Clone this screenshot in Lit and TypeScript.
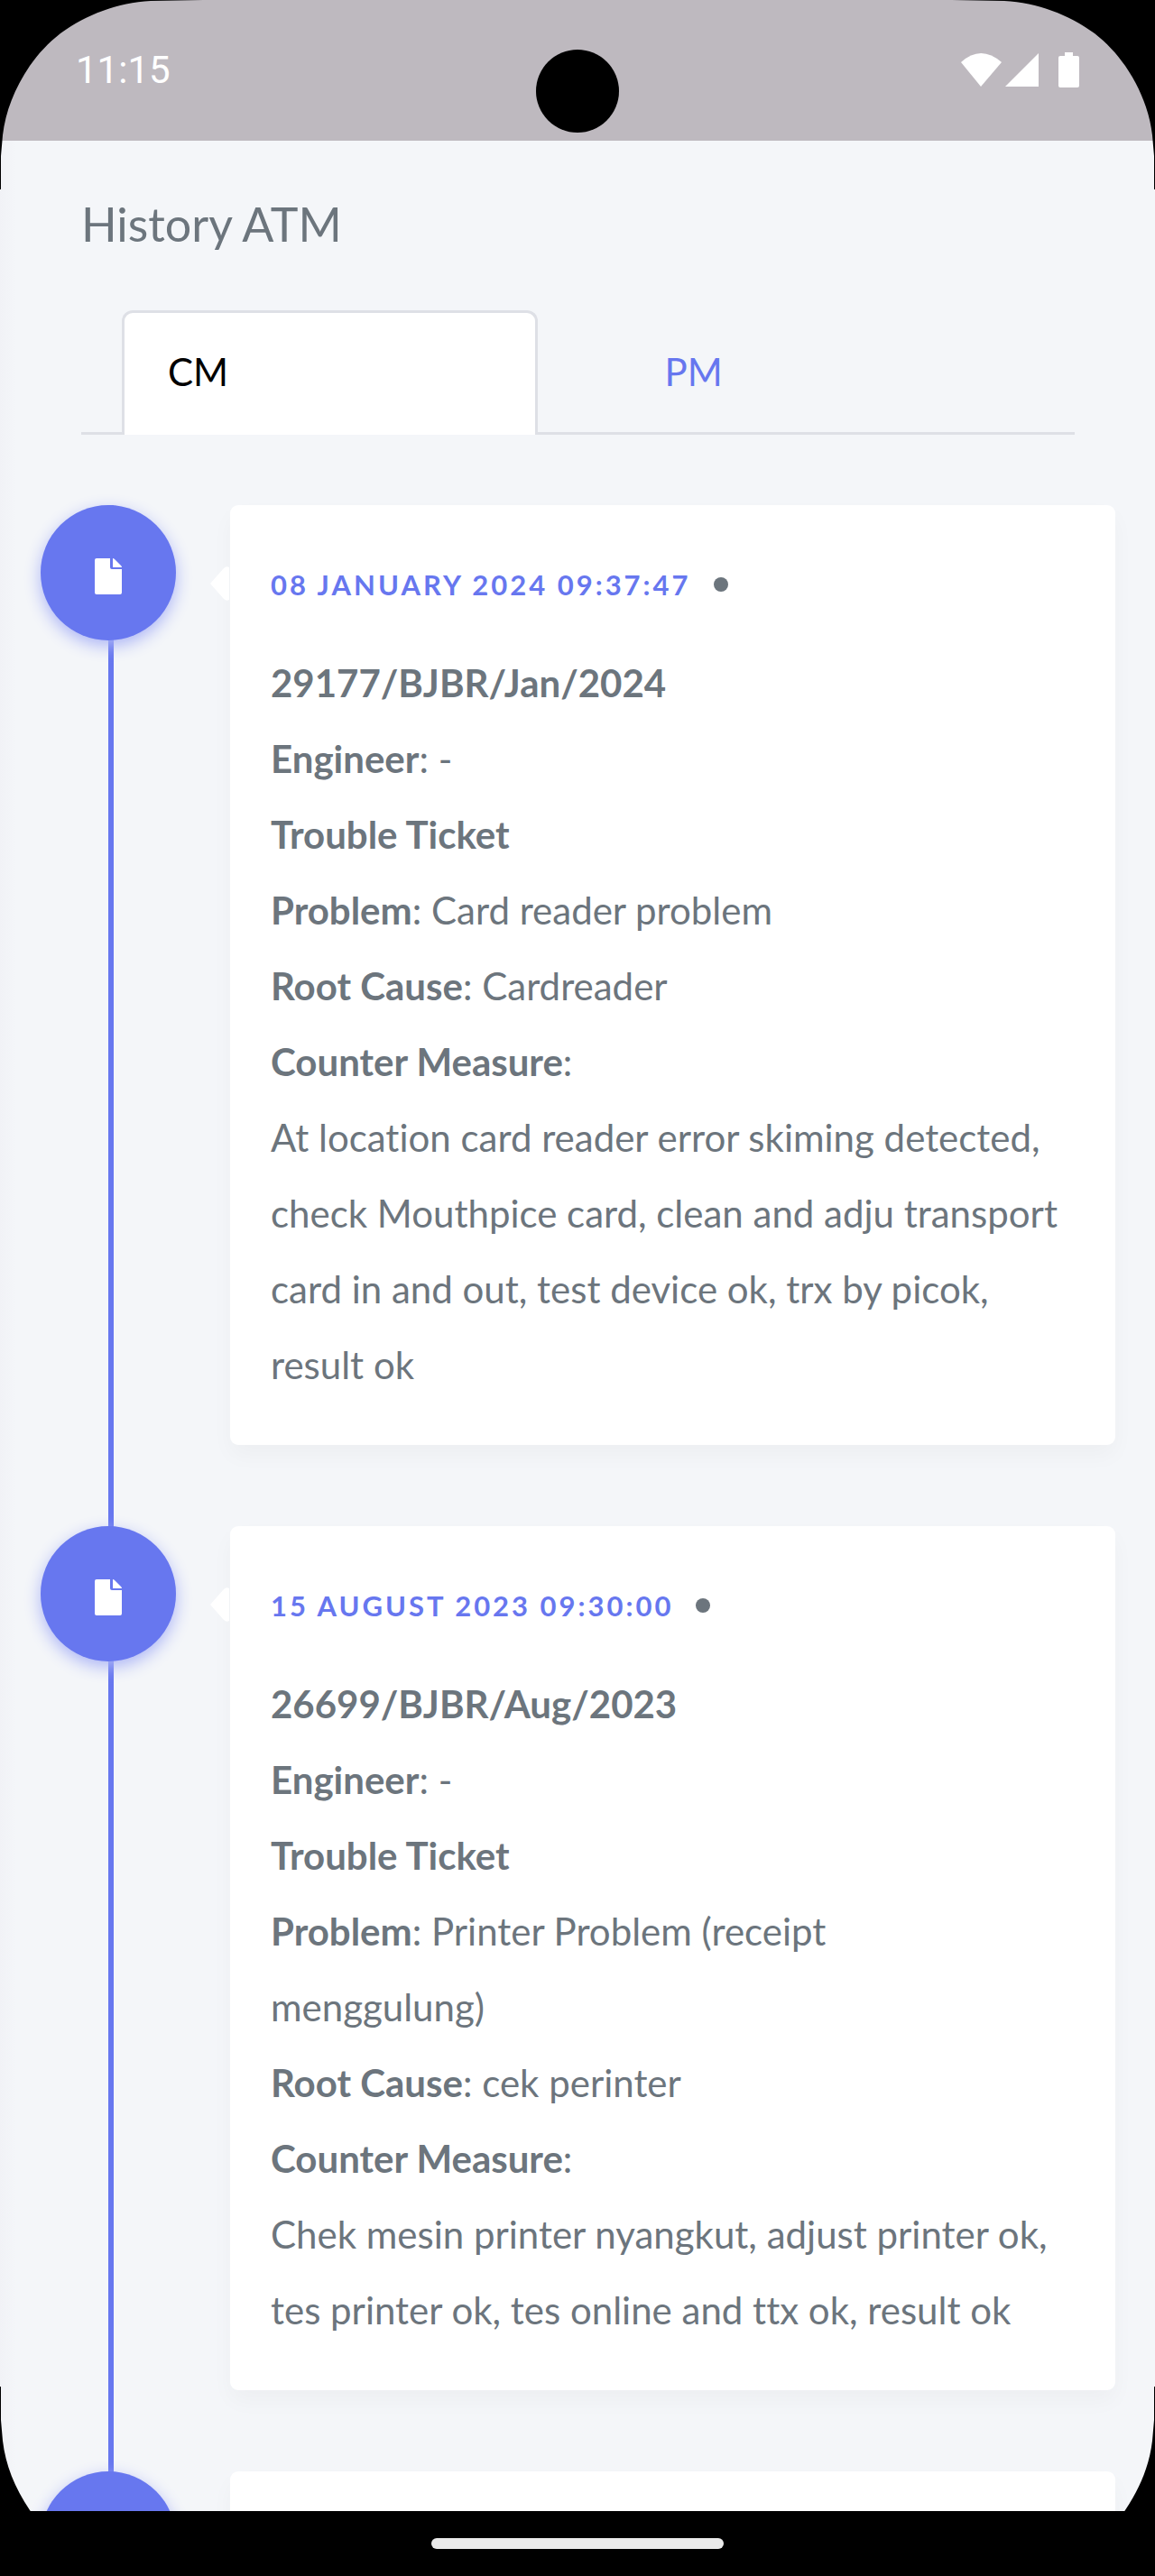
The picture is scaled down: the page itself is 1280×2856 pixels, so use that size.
import { LitElement, html, css, svg, nothing } from "lit";
import { customElement, property, state } from "lit/decorators.js";

interface Visit {
  date: string;
  ticket: string;
  engineer: string;
  problem: string;
  cause: string;
  measure: string;
}

const VISITS: Visit[] = [
  {
    date: "08 January 2024 09:37:47",
    ticket: "29177/BJBR/Jan/2024",
    engineer: "-",
    problem: "Card reader problem",
    cause: "Cardreader",
    measure:
      "At location card reader error skiming detected, check Mouthpice card, clean and adju transport card in and out, test device ok, trx by picok, result ok",
  },
  {
    date: "15 August 2023 09:30:00",
    ticket: "26699/BJBR/Aug/2023",
    engineer: "-",
    problem: "Printer Problem (receipt\nmenggulung)",
    cause: "cek perinter",
    measure:
      "Chek mesin printer nyangkut, adjust printer ok, tes printer ok, tes online and ttx ok, result ok",
  },
];

@customElement("status-bar")
export class StatusBar extends LitElement {
  static styles = css`
    :host {
      position: relative;
      display: flex;
      align-items: center;
      justify-content: space-between;
      box-sizing: border-box;
      height: 156px;
      padding: 0 84px;
      background: #beb9bf;
      color: #fff;
      font: 42px/48px Roboto, "Liberation Sans", sans-serif;
    }
    .time,
    .icons {
      display: block;
      height: 48px;
    }
    .icons {
      width: 132px;
      fill: currentColor;
    }
    .camera {
      position: absolute;
      left: 50%;
      top: 55px;
      width: 92px;
      height: 92px;
      margin-left: -46px;
      border-radius: 50%;
      background: #000;
    }
  `;

  render() {
    return html`
      <span class="time">11:15</span>
      <svg class="icons" viewBox="0 0 132 48" role="img" aria-label="Wi-Fi, signal, battery">
        <path d="M1 15Q23 -5 46 15L23 42Z" />
        <path d="M87 5V42H50Z" />
        <path d="M116 4h9v4h5q2 0 2 2v31q0 2-2 2h-19q-2 0-2-2V10q0-2 2-2h5Z" />
      </svg>
      <span class="camera"></span>
    `;
  }
}

@customElement("visit-entry")
export class VisitEntry extends LitElement {
  @property({ attribute: false }) visit?: Visit;

  static styles = css`
    :host {
      display: grid;
      grid-template-columns: 150px minmax(0, 1fr);
      column-gap: 60px;
      position: relative;
    }
    .line {
      position: absolute;
      left: 75px;
      top: 0;
      bottom: -90px;
      width: 6px;
      background: #6777ef;
    }
    .badge {
      position: relative;
      display: flex;
      align-items: center;
      justify-content: center;
      box-sizing: border-box;
      width: 150px;
      height: 150px;
      padding-top: 8px;
      border-radius: 50%;
      background: #6777ef;
      box-shadow: 0 6px 18px #acb5f6;
    }
    .badge svg {
      width: 30px;
      height: 40px;
      fill: #fff;
    }
    .card {
      position: relative;
      padding: 45px 45px 47px;
      border-radius: 9px;
      background: #fff;
      box-shadow: 0 12px 24px rgba(0, 0, 0, 0.03);
    }
    .caret {
      position: absolute;
      right: 100%;
      top: 68px;
      width: 22px;
      height: 38px;
      fill: #fff;
    }
    .head {
      display: flex;
      align-items: center;
      gap: 25px;
      height: 86px;
      margin-bottom: 24px;
    }
    .date {
      color: #6777ef;
      font-size: 31px;
      font-weight: 700;
      letter-spacing: 3px;
      text-transform: uppercase;
    }
    .dot {
      width: 16px;
      height: 16px;
      border-radius: 50%;
      background: currentColor;
    }
    p {
      margin: 0;
      white-space: pre-line;
    }
  `;

  private renderDetails(v: Visit) {
    return html`
      <header class="head">
        <time class="date">${v.date}</time>
        <span class="dot"></span>
      </header>
      <p><b>${v.ticket}</b></p>
      <p><b>Engineer</b>: ${v.engineer}</p>
      <p><b>Trouble Ticket</b></p>
      <p><b>Problem</b>: ${v.problem}</p>
      <p><b>Root Cause</b>: ${v.cause}</p>
      <p><b>Counter Measure</b>:</p>
      <p>${v.measure}</p>
    `;
  }

  render() {
    return html`
      <span class="line"></span>
      <span class="badge">
        <svg viewBox="0 0 30 40" aria-hidden="true">
          <path d="M2 0H17V10Q17 12 19 12H30V38Q30 40 28 40H2Q0 40 0 38V2Q0 0 2 0Z" />
          <path d="M20 0Q21 0 22 1L29 8Q30 9 30 10H20Z" />
        </svg>
      </span>
      <article class="card">
        <svg class="caret" viewBox="0 0 22 38" aria-hidden="true">
          <path d="M0 19L15 2Q18 -1 21 1V37Q18 39 15 36Z" />
        </svg>
        ${this.visit ? this.renderDetails(this.visit) : nothing}
      </article>
    `;
  }
}

@customElement("app-root")
export class AppRoot extends LitElement {
  @state() private tab = "CM";

  static styles = css`
    :host {
      position: relative;
      display: flex;
      flex-direction: column;
      height: 100vh;
      overflow: hidden;
      background: #000;
      color: #6c757d;
      font: 42px/84px Lato, "Open Sans", sans-serif;
      font-variant-ligatures: no-common-ligatures;
    }
    .screen {
      flex: 1;
      min-height: 0;
      overflow-y: auto;
      scrollbar-width: none;
      background: linear-gradient(90deg, #f1f2f6, #f4f6f9 18px);
    }
    h1 {
      margin: 0;
      padding: 52px 90px 0;
      font-size: 52px;
      font-weight: 400;
      line-height: 80px;
    }
    .tabs {
      display: grid;
      grid-template-columns: 1fr 1fr;
      margin: 56px 89px 78px 90px;
      border-bottom: 3px solid #dee0e6;
    }
    .tab {
      box-sizing: border-box;
      height: 138px;
      margin: 0 45px -3px;
      padding: 0 48px 6px;
      border: 3px solid transparent;
      border-bottom: 0;
      border-radius: 12px 12px 0 0;
      background: none;
      color: #6777ef;
      font: inherit;
      text-align: left;
    }
    .tab[aria-selected="true"] {
      border-color: #dee0e6;
      background: #fff;
      color: #000;
    }
    .list {
      display: flex;
      flex-direction: column;
      gap: 90px;
      padding: 0 44px 0 45px;
    }
    .home {
      display: flex;
      align-items: center;
      justify-content: center;
      height: 72px;
      background: #000;
    }
    .pill {
      width: 324px;
      height: 12px;
      border-radius: 6px;
      background: #eaeaea;
    }
    .corner {
      position: absolute;
      width: 230px;
      height: 230px;
      pointer-events: none;
    }
    .tl {
      left: 0;
      top: 0;
    }
    .tr {
      right: 0;
      top: 0;
      transform: scaleX(-1);
    }
    .bl {
      left: 0;
      bottom: 0;
      transform: scaleY(-1);
    }
    .br {
      right: 0;
      bottom: 0;
      transform: scale(-1, -1);
    }
  `;

  private renderTab(name: string) {
    return html`<button
      class="tab"
      role="tab"
      aria-selected=${this.tab === name ? "true" : "false"}
      @click=${() => (this.tab = name)}
    >${name}</button>`;
  }

  private renderCorner(place: string) {
    return html`<svg class="corner ${place}" viewBox="0 0 230 230" aria-hidden="true">
      ${svg`<path d="M0 0H225L167 1C130 3 96 16 67 37C53 48 43 59 33 73C16 98 6 124 3 150L1 173V210H0Z" />`}
    </svg>`;
  }

  render() {
    return html`
      <status-bar></status-bar>
      <main class="screen">
        <h1>History ATM</h1>
        <div class="tabs" role="tablist">${["CM", "PM"].map((name) => this.renderTab(name))}</div>
        <section class="list">
          ${VISITS.map((v) => html`<visit-entry .visit=${v}></visit-entry>`)}
          <visit-entry></visit-entry>
        </section>
      </main>
      <footer class="home"><span class="pill"></span></footer>
      ${["tl", "tr", "bl", "br"].map((place) => this.renderCorner(place))}
    `;
  }
}
